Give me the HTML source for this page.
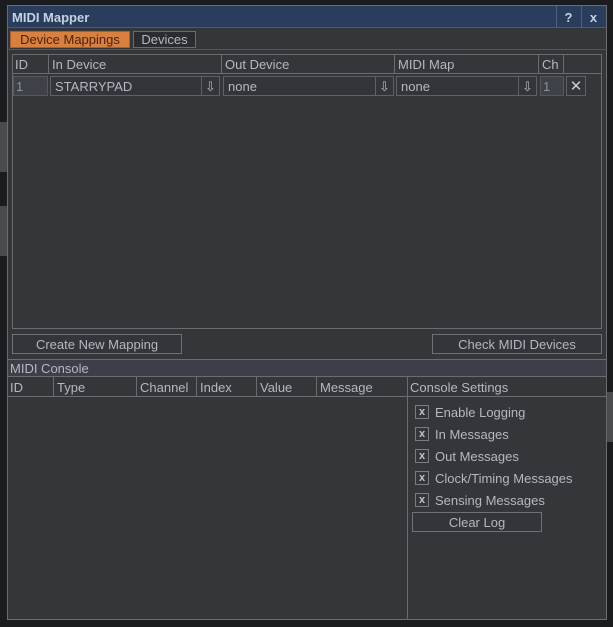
<!DOCTYPE html>
<html><head><style>
*{box-sizing:border-box;margin:0;padding:0}
body{width:613px;height:627px;background:#1b1c1f;position:relative;overflow:hidden;font-family:"Liberation Sans",sans-serif;font-size:13px;color:#b4b8c0}
.a{position:absolute}
.win{left:7px;top:5px;width:600px;height:615px;background:#35363a;border:1px solid #6b6c70}
.t{line-height:19px;white-space:nowrap}
.b{border:1px solid #6b6c70}
.btn{border:1px solid #707176;background:#34353a;text-align:center;line-height:19px}
.inp{background:#3e4148;border:1px solid #55585e;color:#8a9099;line-height:19px;padding-left:2px}
.fld{border:1px solid #606167;background:#34353a;line-height:19px;padding-left:4px}
.arr{border-left:1px solid #606167;width:18px;text-align:center}
.cb{width:14px;height:14px;border:1px solid #7a7c82;font-size:11px;font-weight:bold;text-align:center;line-height:12px;color:#c0c4cc}
</style></head><body>
<div class="a" style="left:0;top:122px;width:7px;height:50px;background:#4a4b4e"></div>
<div class="a" style="left:0;top:206px;width:7px;height:50px;background:#4a4b4e"></div>
<div class="a" style="left:606px;top:392px;width:7px;height:50px;background:#4a4b4e"></div>
<div class="a win"></div>
<div class="a" style="left:8px;top:6px;width:598px;height:22px;background:#2b3d5c;border-bottom:1px solid #4a5a78"></div>
<div class="a t" style="left:12px;top:8px;font-weight:bold;color:#c6d1e4;font-size:13px">MIDI Mapper</div>
<div class="a" style="left:556px;top:6px;width:1px;height:22px;background:#4f6283"></div>
<div class="a" style="left:581px;top:6px;width:1px;height:22px;background:#4f6283"></div>
<div class="a t" style="left:556px;top:8px;width:25px;text-align:center;font-weight:bold;color:#c6d1e4">?</div>
<div class="a t" style="left:581px;top:8px;width:25px;text-align:center;font-weight:bold;color:#c6d1e4">x</div>
<div class="a t" style="left:10px;top:31px;width:120px;height:17px;background:#d8803f;border:1px solid #a0603a;color:#4e220c;text-align:center;line-height:16px">Device Mappings</div>
<div class="a t" style="left:133px;top:31px;width:63px;height:17px;background:#2b2c30;border:1px solid #6b6c70;text-align:center;line-height:16px">Devices</div>
<div class="a" style="left:8px;top:49px;width:598px;height:1px;background:#55565a"></div>
<div class="a b" style="left:12px;top:54px;width:590px;height:275px"></div>
<div class="a" style="left:12px;top:73px;width:590px;height:1px;background:#6b6c70"></div>
<div class="a" style="left:48px;top:54px;width:1px;height:20px;background:#6b6c70"></div>
<div class="a" style="left:221px;top:54px;width:1px;height:20px;background:#6b6c70"></div>
<div class="a" style="left:394px;top:54px;width:1px;height:20px;background:#6b6c70"></div>
<div class="a" style="left:538px;top:54px;width:1px;height:20px;background:#6b6c70"></div>
<div class="a" style="left:563px;top:54px;width:1px;height:20px;background:#6b6c70"></div>
<div class="a t" style="left:15px;top:55px">ID</div>
<div class="a t" style="left:52px;top:55px">In Device</div>
<div class="a t" style="left:225px;top:55px">Out Device</div>
<div class="a t" style="left:398px;top:55px">MIDI Map</div>
<div class="a t" style="left:542px;top:55px">Ch</div>
<div class="a inp" style="left:13px;top:76px;width:35px;height:20px">1</div>
<div class="a fld" style="left:50px;top:76px;width:170px;height:20px">STARRYPAD<div class="a arr" style="right:0;top:0;height:18px">⇩</div></div>
<div class="a fld" style="left:223px;top:76px;width:171px;height:20px">none<div class="a arr" style="right:0;top:0;height:18px">⇩</div></div>
<div class="a fld" style="left:396px;top:76px;width:141px;height:20px">none<div class="a arr" style="right:0;top:0;height:18px">⇩</div></div>
<div class="a inp" style="left:540px;top:76px;width:24px;height:20px">1</div>
<div class="a fld" style="left:566px;top:76px;width:20px;height:20px;padding:0;text-align:center;font-size:15px;color:#c8ccd2">✕</div>
<div class="a btn" style="left:12px;top:334px;width:170px;height:20px">Create New Mapping</div>
<div class="a btn" style="left:432px;top:334px;width:170px;height:20px">Check MIDI Devices</div>
<div class="a" style="left:8px;top:359px;width:598px;height:18px;background:#3c3f47;border-top:1px solid #6b6c70;border-bottom:1px solid #6b6c70"></div>
<div class="a t" style="left:10px;top:359px">MIDI Console</div>
<div class="a" style="left:8px;top:396px;width:598px;height:1px;background:#6b6c70"></div>
<div class="a" style="left:53px;top:377px;width:1px;height:20px;background:#6b6c70"></div>
<div class="a" style="left:136px;top:377px;width:1px;height:20px;background:#6b6c70"></div>
<div class="a" style="left:196px;top:377px;width:1px;height:20px;background:#6b6c70"></div>
<div class="a" style="left:256px;top:377px;width:1px;height:20px;background:#6b6c70"></div>
<div class="a" style="left:316px;top:377px;width:1px;height:20px;background:#6b6c70"></div>
<div class="a" style="left:407px;top:377px;width:1px;height:243px;background:#6b6c70"></div>
<div class="a t" style="left:10px;top:378px">ID</div>
<div class="a t" style="left:57px;top:378px">Type</div>
<div class="a t" style="left:140px;top:378px">Channel</div>
<div class="a t" style="left:200px;top:378px">Index</div>
<div class="a t" style="left:260px;top:378px">Value</div>
<div class="a t" style="left:320px;top:378px">Message</div>
<div class="a t" style="left:410px;top:378px">Console Settings</div>
<div class="a cb" style="left:415px;top:405px">x</div><div class="a t" style="left:435px;top:403px">Enable Logging</div>
<div class="a cb" style="left:415px;top:427px">x</div><div class="a t" style="left:435px;top:425px">In Messages</div>
<div class="a cb" style="left:415px;top:449px">x</div><div class="a t" style="left:435px;top:447px">Out Messages</div>
<div class="a cb" style="left:415px;top:471px">x</div><div class="a t" style="left:435px;top:469px">Clock/Timing Messages</div>
<div class="a cb" style="left:415px;top:493px">x</div><div class="a t" style="left:435px;top:491px">Sensing Messages</div>
<div class="a btn" style="left:412px;top:512px;width:130px;height:20px">Clear Log</div>
</body></html>
